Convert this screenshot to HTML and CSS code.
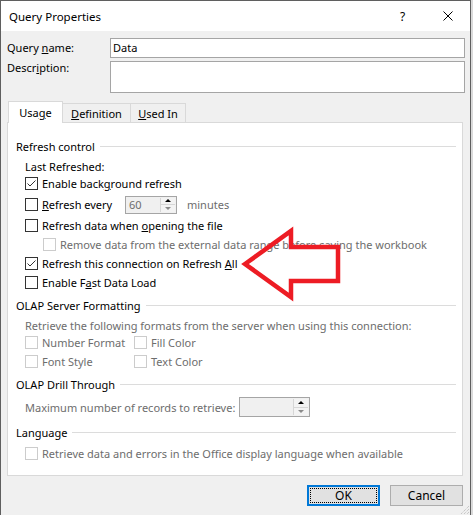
FILE: index.html
```html
<!DOCTYPE html>
<html lang="en">
<head>
  <meta charset="UTF-8" />
  <title>Query Properties</title>
  <link rel="stylesheet" href="styles.css">
</head>
<body>

<div class="dialog">
  <div class="titlebar">
    <span class="title">Query Properties</span>
    <span class="caption-btn help">?</span>
    <span class="caption-btn">
      <svg width="10" height="10" viewBox="0 0 10 10"><path d="M0.5 0.5 L9.5 9.5 M9.5 0.5 L0.5 9.5" stroke="#000" stroke-width="1" fill="none"/></svg>
    </span>
  </div>

  <div class="content">
    <div class="field">
      <span class="field-label">Query <u>n</u>ame:</span>
      <div class="textbox">Data</div>
    </div>
    <div class="field">
      <span class="field-label top">Descr<u>i</u>ption:</span>
      <div class="textbox tall"></div>
    </div>

    <div class="tabs">
      <div class="tab active">Usa<u>g</u>e</div>
      <div class="tab tab-def"><u>D</u>efinition</div>
      <div class="tab tab-used"><u>U</u>sed In</div>
    </div>

    <div class="panel">
      <div class="group-title">Refresh control</div>
      <div class="row note">Last Refreshed:</div>
      <div class="row first">
        <span class="check on"><svg width="11" height="11" viewBox="0 0 11 11"><path d="M1.5 5.5 L4 8 L9.5 2.5" stroke="#333" fill="none"/></svg></span>
        <span>Enable back<u>g</u>round refresh</span>
      </div>
      <div class="row spin-row">
        <span class="check"></span>
        <span class="every-label"><u>R</u>efresh every</span>
        <div class="spin small">
          <span class="spin-value">60</span>
          <span class="spin-btns"><span class="arrow-up"></span><span class="arrow-down"></span></span>
        </div>
        <span class="muted minutes">minutes</span>
      </div>
      <div class="row">
        <span class="check"></span>
        <span>Refresh data when <u>o</u>pening the file</span>
      </div>
      <div class="row indent">
        <span class="check off"></span>
        <span class="muted">Remove data from the external data range before saving the workbook</span>
      </div>
      <div class="row">
        <span class="check on"><svg width="11" height="11" viewBox="0 0 11 11"><path d="M1.5 5.5 L4 8 L9.5 2.5" stroke="#333" fill="none"/></svg></span>
        <span>Refresh this connection on Refresh <u>A</u>ll</span>
      </div>
      <div class="row">
        <span class="check"></span>
        <span>Enable F<u>a</u>st Data Load</span>
      </div>

      <div class="group-title">OLAP Server Formatting</div>
      <div class="row note muted">Retrieve the following formats from the server when using this connection:</div>
      <div class="row first">
        <span class="col"><span class="check off"></span><span class="muted">Number Format</span></span>
        <span class="check off"></span><span class="muted">Fill Color</span>
      </div>
      <div class="row">
        <span class="col"><span class="check off"></span><span class="muted">Font Style</span></span>
        <span class="check off"></span><span class="muted">Text Color</span>
      </div>

      <div class="group-title">OLAP Drill Through</div>
      <div class="row spin-row max-row">
        <span class="muted max-label">Maximum number of records to retrieve:</span>
        <div class="spin wide">
          <span class="spin-value"></span>
          <span class="spin-btns"><span class="arrow-up"></span><span class="arrow-down"></span></span>
        </div>
      </div>

      <div class="group-title lang-title">Language</div>
      <div class="row lang-row">
        <span class="check off"></span>
        <span class="muted">Retrieve data and errors in the Office display language when available</span>
      </div>
    </div>

    <div class="buttons">
      <button class="btn default"><span class="focus">OK</span></button>
      <button class="btn">Cancel</button>
    </div>
  </div>

  <!-- size grip -->
  <svg class="grip" width="10" height="10" viewBox="0 0 10 10">
    <path d="M9 1 L1 9 M9 4 L4 9 M9 7 L7 9" stroke="#b5b5b5" stroke-width="1" stroke-dasharray="1 1"/>
  </svg>

  <!-- red callout arrow -->
  <svg class="callout" width="473" height="515" viewBox="0 0 473 515">
    <polygon points="245,264 291,231 291,247 338,247 338,281 291,281 291,297" fill="none" stroke="#ed1c24" stroke-width="4.5" stroke-miterlimit="4"/>
  </svg>
</div>

</body>
</html>
```

FILE: styles.css
```css
* {
  box-sizing: border-box;
}
body {
  margin: 0;
  background: #dadada;
  color: #000;
  font-family: 'Segoe UI', 'Noto Sans', sans-serif;
  font-size: 11px;
  overflow: hidden;
}
u {
  text-underline-offset: 1px;
}

.dialog {
  position: relative;
  width: 471px;
  height: 520px;
  background: #f0f0f0;
  border: 1px solid #5f5f5f;
  border-bottom: none;
  overflow: hidden;
}

/* Title bar */
.titlebar {
  height: 30px;
  background: #fff;
  display: flex;
  align-items: center;
  padding-left: 8px;
}
.title {
  flex: 1;
  font-size: 11.5px;
}
.caption-btn {
  width: 45px;
  height: 30px;
  display: flex;
  align-items: center;
  justify-content: center;
}
.help {
  font-size: 12px;
}

/* Top fields */
.content {
  padding: 7px 5px 0 6px;
}
.field {
  display: flex;
}
.field + .field {
  margin-top: 3px;
}
.field-label {
  width: 103px;
  line-height: 20px;
}
.field-label.top {
  line-height: 14px;
}
.textbox {
  flex: 1;
  height: 20px;
  background: #fff;
  border: 1px solid #a5a5a5;
  padding-left: 2px;
  line-height: 18px;
}
.textbox.tall {
  height: 32px;
}

/* Tabs */
.tabs {
  display: flex;
  height: 21px;
  margin-top: 8px;
  padding-left: 1px;
}
.tab {
  height: 19px;
  margin-top: 2px;
  border: 1px solid #d9d9d9;
  border-bottom: none;
  border-left: none;
  text-align: center;
  line-height: 19px;
}
.tab.active {
  position: relative;
  z-index: 1;
  width: 55px;
  height: 22px;
  margin-top: 0;
  background: #fff;
  border-left: 1px solid #d9d9d9;
  line-height: 22px;
}
.tab-def {
  width: 68px;
}
.tab-used {
  width: 55px;
}

.panel {
  width: 456px;
  height: 354px;
  background: #fff;
  border: 1px solid #d9d9d9;
  padding: 15px 6px 0 8px;
}
.group-title {
  display: flex;
  align-items: center;
  height: 17px;
  margin-top: 6px;
}
.group-title:first-child {
  margin-top: 0;
}
.group-title::after {
  content: "";
  flex: 1;
  height: 1px;
  margin-left: 5px;
  background: #dcdcdc;
}
.lang-title {
  margin-top: 7px;
}

.row {
  display: flex;
  align-items: center;
  height: 17px;
  margin-top: 2px;
  padding-left: 9px;
  white-space: nowrap;
}
.row.note {
  margin-top: 3px;
}
.row.first {
  margin-top: 0;
}
.row.spin-row {
  height: 19px;
  margin: 3px 0;
}
.row.max-row {
  height: 20px;
  margin-top: 4px;
}
.row.lang-row {
  margin-top: 4px;
}
.row.indent {
  padding-left: 27px;
}
.muted {
  color: #6d6d6d;
}

.check {
  flex: none;
  width: 13px;
  height: 13px;
  margin-right: 4px;
  background: #fff;
  border: 1px solid #333;
  display: flex;
  align-items: center;
  justify-content: center;
}
.check.off {
  border-color: #cccccc;
}
.col {
  display: flex;
  align-items: center;
  width: 109px;
}
.every-label {
  width: 83px;
}
.minutes {
  margin-left: 10px;
}
.max-label {
  width: 214px;
}

/* Spin boxes */
.spin {
  display: flex;
  height: 100%;
  background: #f0f0f0;
  border: 1px solid #a5a5a5;
  padding: 1px;
}
.spin.small {
  width: 52px;
  height: 18px;
}
.spin.wide {
  width: 71px;
}
.spin-value {
  flex: 1;
  padding-left: 2px;
  color: #6d6d6d;
  line-height: 14px;
}
.spin-btns {
  width: 15px;
  display: flex;
  flex-direction: column;
  border-left: 1px solid #d6d6d6;
}
.spin-btns span {
  flex: 1;
  display: flex;
  align-items: center;
  justify-content: center;
  background: #f3f3f3;
}
.spin-btns .arrow-up {
  border-bottom: 1px solid #d6d6d6;
}
.arrow-up::before {
  content: "";
  border: 3px solid transparent;
  border-top: none;
  border-bottom: 3px solid #000;
}
.arrow-down::before {
  content: "";
  border: 3px solid transparent;
  border-bottom: none;
  border-top: 3px solid #8a8a8a;
}

/* Buttons */
.buttons {
  display: flex;
  justify-content: flex-end;
  gap: 10px;
  margin-top: 9px;
  padding-right: 2px;
}
.btn {
  width: 73px;
  height: 21px;
  padding: 0;
  background: #e1e1e1;
  border: 1px solid #adadad;
  font: inherit;
  font-size: 12px;
  color: #000;
}
.btn.default {
  border: 2px solid #0078d7;
  padding: 1px;
}
.focus {
  display: block;
  height: 100%;
  border: 1px dotted #000;
  line-height: 13px;
}

.grip {
  position: absolute;
  right: 0;
  bottom: 5px;
}
.callout {
  position: absolute;
  left: -1px;
  top: -1px;
  pointer-events: none;
}
```
